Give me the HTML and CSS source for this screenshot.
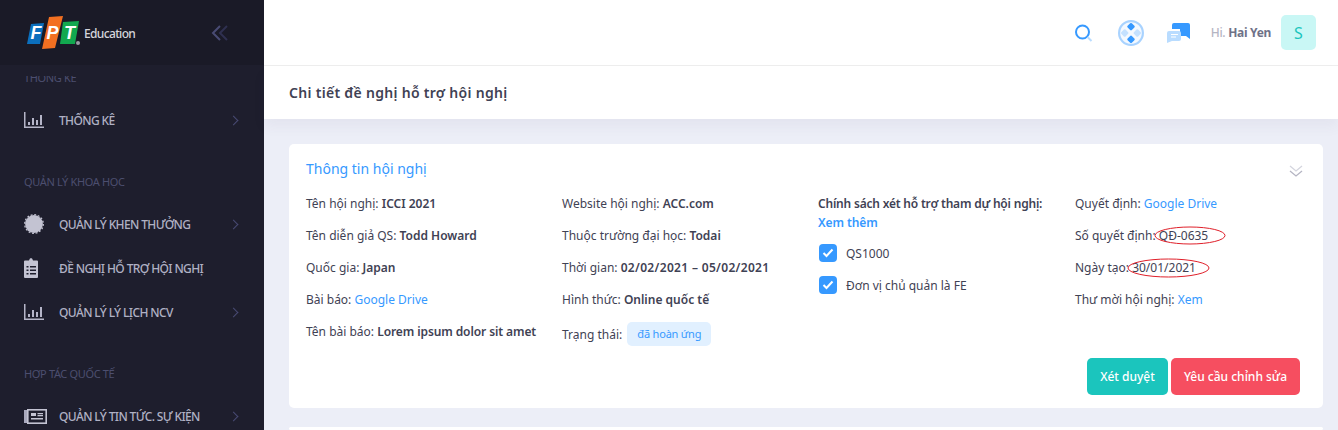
FILE: index.html
```html
<!DOCTYPE html>
<html lang="en">
<head>
    <meta charset="UTF-8">
    <meta name="viewport" content="width=device-width, initial-scale=1.0">
    <title>Chi tiết đề nghị hỗ trợ hội nghị</title>
    <link rel="stylesheet" href="styles.css">
</head>
<body>
    <aside class="sidebar">
        <div class="brand">
            <div class="logo">
                <svg width="54" height="34" viewBox="0 0 54 34">
                    <polygon points="4,8 17,7 13,28 0,28" fill="#0b6fbd"/>
                    <polygon points="22,1 36,0 28,32 15,33" fill="#f37021"/>
                    <polygon points="36,6 52,5 48,28 33,28" fill="#12a84f"/>
                    <circle cx="51" cy="27" r="2" fill="#9a9aa5"/>
                    <text x="3.500" y="23" class="logo-letter">F</text>
                    <text x="19.500" y="23" class="logo-letter">P</text>
                    <text x="37" y="23" class="logo-letter">T</text>
                </svg>
                <span class="logo-text">Education</span>
            </div>
            <svg class="collapse" width="18" height="16" viewBox="0 0 18 16">
                <path d="M9 1 L2 8 L9 15" fill="none" stroke="#494b74" stroke-width="2"/>
                <path d="M16 1 L9 8 L16 15" fill="none" stroke="#2f3050" stroke-width="2"/>
            </svg>
        </div>
        <nav class="nav">
            <div class="nav-inner">
                <div class="nav-label">THỐNG KÊ</div>
                <a class="nav-item">
                    <svg class="nav-icon" width="20" height="16" viewBox="0 0 20 16"><path d="M0.750 0 V15.250 H20" fill="none" stroke="#b5b5c8" stroke-width="1.500"/><path d="M4 10h2v3H4zM8 6h2v7H8zM12 8h2v5h-2zM16 3h2v10h-2z" fill="#b5b5c8"/></svg>
                    <span class="nav-text">THỐNG KÊ</span>
                    <span class="chev"></span>
                </a>
                <div class="nav-label">QUẢN LÝ KHOA HỌC</div>
                <a class="nav-item">
                    <svg class="nav-icon" width="20" height="20" viewBox="0 0 20 20"><circle cx="10" cy="10" r="8.900" fill="#c3c3d2"/><circle cx="10" cy="10" r="9.300" fill="none" stroke="#c3c3d2" stroke-width="1.300" stroke-dasharray="1.900 1.750"/></svg>
                    <span class="nav-text">QUẢN LÝ KHEN THƯỞNG</span>
                    <span class="chev"></span>
                </a>
                <a class="nav-item">
                    <svg class="nav-icon" width="20" height="20" viewBox="1 0 20 20"><path d="M1 3.500 Q1 2.500 2 2.500 H6 Q6.500 0 8 0 Q9.500 0 10 2.500 H14 Q15 2.500 15 3.500 V19 Q15 20 14 20 H2 Q1 20 1 19 Z" fill="#c3c3d2"/><path d="M3.500 8h2v1.400h-2zM7 8h6v1.400H7zM3.500 11.500h2v1.400h-2zM7 11.500h6v1.400H7zM3.500 15h2v1.400h-2zM7 15h6v1.400H7z" fill="#1e1e2d"/></svg>
                    <span class="nav-text">ĐỀ NGHỊ HỖ TRỢ HỘI NGHỊ</span>
                </a>
                <a class="nav-item">
                    <svg class="nav-icon" width="20" height="16" viewBox="0 0 20 16"><path d="M0.750 0 V15.250 H20" fill="none" stroke="#b5b5c8" stroke-width="1.500"/><path d="M4 10h2v3H4zM8 6h2v7H8zM12 8h2v5h-2zM16 3h2v10h-2z" fill="#b5b5c8"/></svg>
                    <span class="nav-text">QUẢN LÝ LÝ LỊCH NCV</span>
                    <span class="chev"></span>
                </a>
                <div class="nav-label">HỢP TÁC QUỐC TẾ</div>
                <a class="nav-item">
                    <svg class="nav-icon" width="23" height="15" viewBox="0 0 23 15"><rect x="0" y="1" width="3" height="13" fill="#a9a9bd"/><rect x="3.800" y="0.800" width="18.400" height="13.400" fill="none" stroke="#c3c3d2" stroke-width="1.600"/><path d="M7 4h5v3H7zM13.500 4H19v1.200h-5.500zM13.500 6h5.500v1.200h-5.500zM7 9h12v1.400H7z" fill="#c3c3d2"/></svg>
                    <span class="nav-text">QUẢN LÝ TIN TỨC. SỰ KIỆN</span>
                    <span class="chev"></span>
                </a>
            </div>
        </nav>
    </aside>

    <main class="main">
        <header class="topbar">
            <svg class="top-icon icon-search" width="20" height="20" viewBox="0 0 20 20">
                <circle cx="9.500" cy="9" r="6.500" fill="none" stroke="#3699ff" stroke-width="2"/>
                <path d="M14.500 14 L18.500 18" stroke="#b9dcff" stroke-width="2"/>
            </svg>
            <svg class="top-icon icon-apps" width="26" height="26" viewBox="0 0 26 26">
                <circle cx="13" cy="13" r="11.900" fill="#f4f9ff" stroke="#a9d3ff" stroke-width="2.200"/>
                <rect x="10" y="3.700" width="6" height="6" rx="1.200" transform="rotate(45 13 6.700)" fill="#3699ff"/>
                <rect x="10" y="16.300" width="6" height="6" rx="1.200" transform="rotate(45 13 19.300)" fill="#3699ff"/>
                <rect x="3.700" y="10" width="6" height="6" rx="1.200" transform="rotate(45 6.700 13)" fill="#c4e1ff"/>
                <rect x="16.300" y="10" width="6" height="6" rx="1.200" transform="rotate(45 19.300 13)" fill="#c4e1ff"/>
            </svg>
            <svg class="top-icon icon-chat" width="23" height="20" viewBox="0 0 23 20">
                <path d="M5 2 Q5 0 7 0 H21 Q23 0 23 2 V16 L19 13 H13 V6 H5 Z" fill="#3699ff"/>
                <path d="M2 8 H12 Q14 8 14 10 V16 Q14 18 12 18 H5 L0 20 V10 Q0 8 2 8 Z" fill="#b9dcff"/>
                <path d="M4 11h7v1H4zM4 13.500h5v1H4z" fill="#fff"/>
            </svg>
            <div class="hello">Hi. <b>Hai Yen</b></div>
            <div class="avatar">S</div>
        </header>
        <div class="subheader">Chi tiết đề nghị hỗ trợ hội nghị</div>

        <div class="content">
            <section class="card">
                <div class="card-head">
                    <h3>Thông tin hội nghị</h3>
                    <svg width="14" height="12" viewBox="0 0 14 12"><path d="M1 1 L7 6 L13 1" fill="none" stroke="#d4d5de" stroke-width="1.300"/><path d="M1 6 L7 11 L13 6" fill="none" stroke="#b5b5c3" stroke-width="1.300"/></svg>
                </div>
                <div class="info-grid">
                    <div class="info-col">
                        <p>Tên hội nghị: <b>ICCI 2021</b></p>
                        <p>Tên diễn giả QS: <b>Todd Howard</b></p>
                        <p>Quốc gia: <b>Japan</b></p>
                        <p>Bài báo: <a>Google Drive</a></p>
                        <p>Tên bài báo: <b class="tight">Lorem ipsum dolor sit amet</b></p>
                    </div>
                    <div class="info-col">
                        <p>Website hội nghị: <b>ACC.com</b></p>
                        <p>Thuộc trường đại học: <b>Todai</b></p>
                        <p>Thời gian: <b class="dates">02/02/2021 – 05/02/2021</b></p>
                        <p>Hình thức: <b>Online quốc tế</b></p>
                        <p class="status">Trạng thái: <span class="badge">đã hoàn ứng</span></p>
                    </div>
                    <div class="info-col">
                        <div class="policy">
                            <b>Chính sách xét hỗ trợ tham dự hội nghị:</b><br>
                            <a class="more">Xem thêm</a>
                        </div>
                        <label class="check"><span class="box"><svg width="12" height="10" viewBox="0 0 12 10"><path d="M1.500 5 L4.500 8 L10.500 1.500" fill="none" stroke="#fff" stroke-width="2"/></svg></span>QS1000</label>
                        <label class="check"><span class="box"><svg width="12" height="10" viewBox="0 0 12 10"><path d="M1.500 5 L4.500 8 L10.500 1.500" fill="none" stroke="#fff" stroke-width="2"/></svg></span>Đơn vị chủ quản là FE</label>
                    </div>
                    <div class="info-col">
                        <p>Quyết định: <a>Google Drive</a></p>
                        <p>Số quyết định: <span class="circled">QĐ-0635<svg class="ring" width="72" height="19" viewBox="0 0 72 19"><ellipse cx="36" cy="9.500" rx="35" ry="8.500" fill="none" stroke="#e0202a"/></svg></span></p>
                        <p>Ngày tạo: <span class="circled">30/01/2021<svg class="ring" width="83" height="20" viewBox="0 0 83 20"><ellipse cx="41.500" cy="10" rx="40.500" ry="9" fill="none" stroke="#e0202a"/></svg></span></p>
                        <p>Thư mời hội nghị: <a>Xem</a></p>
                    </div>
                </div>
                <div class="actions">
                    <button class="btn btn-ok">Xét duyệt</button>
                    <button class="btn btn-edit">Yêu cầu chỉnh sửa</button>
                </div>
            </section>
            <section class="card card-next"></section>
        </div>
    </main>
</body>
</html>
```

FILE: styles.css
```css
* { box-sizing: border-box; }
html, body { height: 100%; }
body { margin: 0; display: flex; height: 430px; overflow: hidden; background: #eceef7; font-family: "Noto Sans", sans-serif; font-size: 12px; color: #3f4254; }

.sidebar { width: 264px; flex: none; background: #1e1e2d; display: flex; flex-direction: column; }
.brand { height: 65px; flex: none; background: #1a1a27; display: flex; align-items: center; justify-content: space-between; padding: 0 35px 0 27px; }
.logo { display: flex; align-items: center; gap: 3px; }
.logo-letter { font-family: "Liberation Sans", sans-serif; font-size: 18px; font-weight: bold; font-style: italic; fill: #fff; }
.logo-text { color: #d5d5dc; font-size: 12px; font-weight: 500; margin-top: 1px; letter-spacing: -0.65px; }
.nav { flex: 1; min-height: 0; margin-top: 11px; overflow: hidden; }
.nav-inner { margin-top: -18px; }
.nav-label { height: 40px; margin-top: 20px; line-height: 40px; padding-left: 24px; color: #4c4e6f; font-size: 11px; letter-spacing: -0.35px; }
.nav-label:first-child { margin-top: 0; }
.nav-item { height: 44px; display: flex; align-items: center; position: relative; padding-left: 24px; color: #b0b1c4; font-size: 12px; font-weight: 500; letter-spacing: -0.62px; }
.nav-icon { flex: none; }
.nav-text { position: absolute; left: 59px; }
.chev { position: absolute; left: 230px; width: 7px; height: 7px; border-top: 1px solid #494b74; border-right: 1px solid #494b74; transform: rotate(45deg); }

.main { flex: 1; min-width: 0; display: flex; flex-direction: column; }
.topbar { height: 66px; flex: none; background: #fff; border-bottom: 1px solid #eee; display: flex; align-items: center; justify-content: flex-end; padding-right: 22px; }
.icon-search { margin-right: 25px; }
.icon-apps { margin-right: 23px; }
.icon-chat { margin-right: 21px; }
.hello { color: #b5b5c3; font-size: 12px; font-weight: 500; letter-spacing: -0.3px; margin-right: 10px; }
.hello b { color: #6f7288; font-weight: 700; }
.avatar { width: 35px; height: 35px; border-radius: 5px; background: #c9f7f5; color: #1bc5bd; font-size: 16px; display: flex; align-items: center; justify-content: center; }
.subheader { height: 53px; flex: none; background: #fff; padding-left: 25px; padding-top: 17px; font-size: 14px; font-weight: 600; letter-spacing: 0.3px; color: #3f4254; box-shadow: 0 8px 12px rgba(82, 63, 105, 0.05); }

.content { flex: 1; min-height: 0; padding: 25px 15px 0 25px; }
.card { background: #fff; border-radius: 5px; height: 264px; padding: 13px 17px; }
.card-next { height: 3px; padding: 0; margin-top: 19px; }
.card-head { display: flex; justify-content: space-between; align-items: center; height: 22px; padding-right: 3px; }
.card-head svg { margin-top: 6px; }
.card-head h3 { margin: 0; font-size: 14px; font-weight: 400; color: #3699ff; }
.info-grid { display: grid; grid-template-columns: 256px 256px 257px 1fr; margin-top: 16px; height: 160px; }
.info-col p { margin: 0; height: 32px; line-height: 18px; }
.info-col b { font-weight: 600; }
.info-col a { color: #3699ff; }
.info-col .status { margin-top: -1px; }
.tight { letter-spacing: -0.1px; }
.dates { letter-spacing: 0.33px; }
.badge { display: inline-block; margin-left: 2px; padding: 0 10px; height: 24px; line-height: 23px; border-radius: 5px; background: #e1f0ff; color: #3699ff; font-size: 11px; letter-spacing: -0.2px; vertical-align: 1px; }
.policy { margin-top: -1px; line-height: 19px; margin-bottom: 5px; }
.policy b { font-weight: 600; letter-spacing: -0.2px; }
.more { font-weight: 600; letter-spacing: -0.1px; }
.check { display: flex; align-items: center; height: 32px; margin-left: 1px; }
.box { width: 18px; height: 18px; border-radius: 4px; background: #3699ff; margin-right: 9px; display: flex; align-items: center; justify-content: center; }
.circled { position: relative; }
.ring { position: absolute; top: -1px; left: -5px; }
.actions { display: flex; justify-content: flex-end; gap: 3px; padding-right: 6px; margin-top: 3px; }
.btn { height: 37px; border: 0; border-radius: 5px; color: #fff; font-family: inherit; font-size: 12px; font-weight: 500; }
.btn-ok { width: 81px; background: #1bc5bd; }
.btn-edit { width: 129px; background: #f64e60; }
```
